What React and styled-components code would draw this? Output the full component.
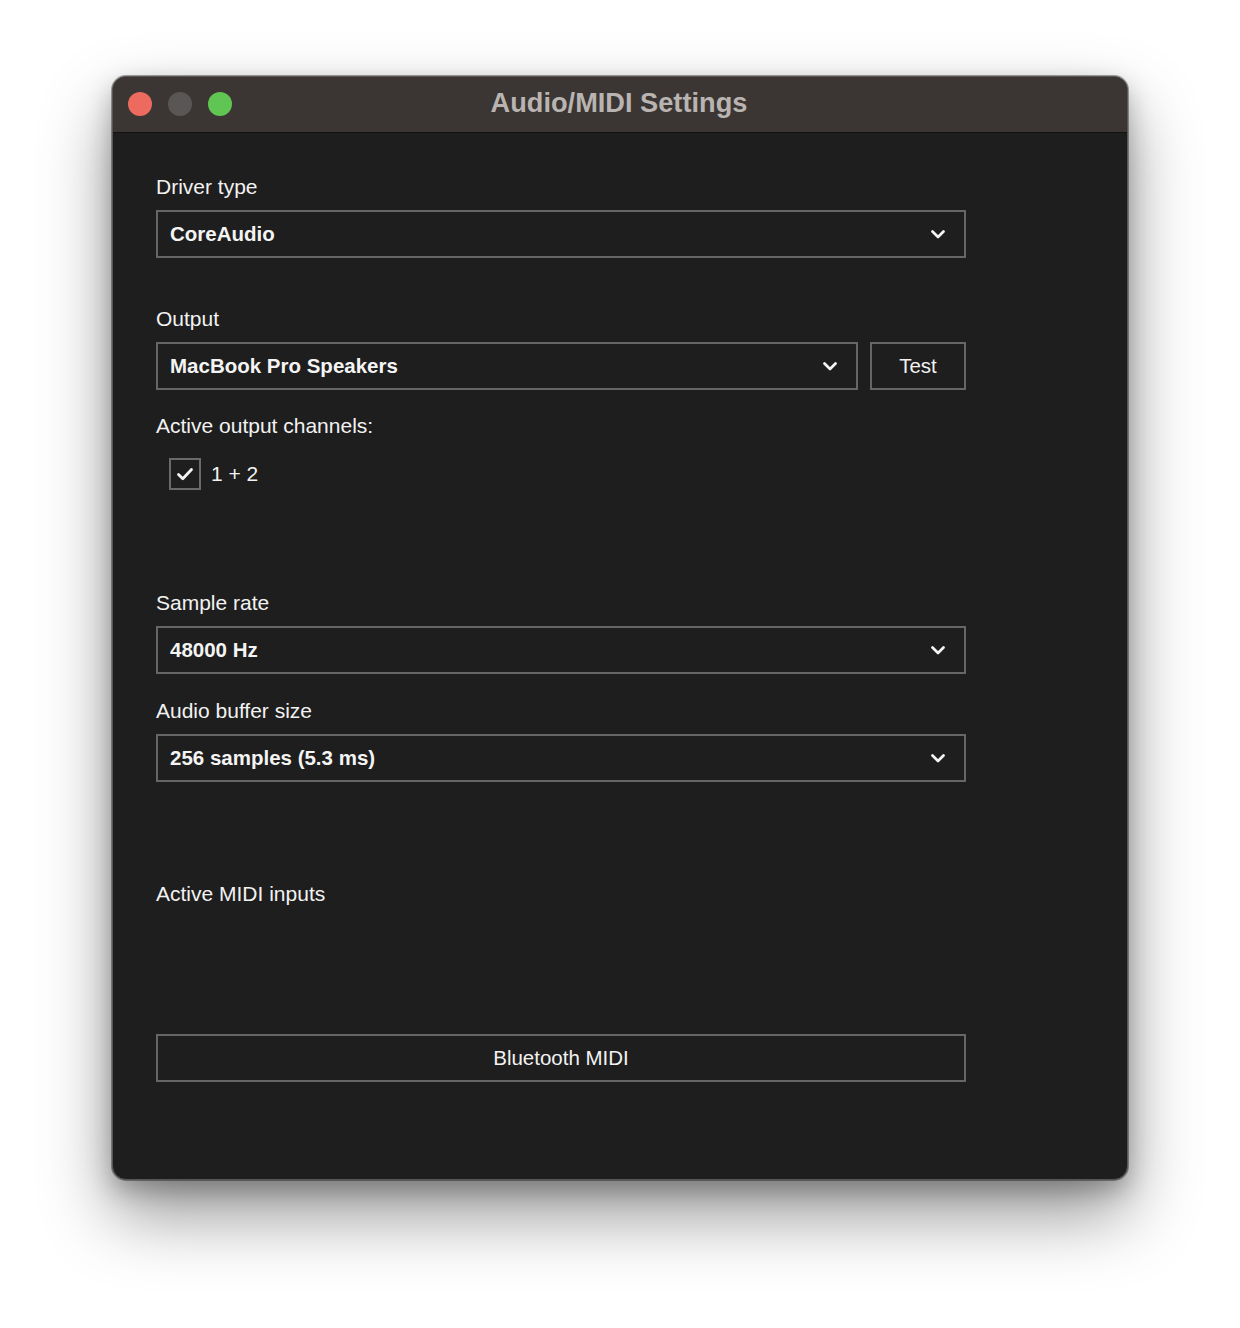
import React, { useState } from 'react'
import styled, { createGlobalStyle } from 'styled-components'

const GlobalStyle = createGlobalStyle`
  html, body {
    margin: 0;
    padding: 0;
    background: #ffffff;
    font-family: "Liberation Sans", Arial, sans-serif;
  }
`

const Page = styled.div`
  padding: 76px 112px 148px;
  background: #ffffff;
`

const Window = styled.div`
  width: 1016px;
  height: 1104px;
  box-sizing: border-box;
  border-radius: 14px;
  overflow: hidden;
  background: #1e1e1e;
  border: 1px solid #5a5656;
  box-shadow: 0 0 0 1px rgba(0, 0, 0, 0.35), 0 34px 70px rgba(0, 0, 0, 0.42), 0 10px 24px rgba(0, 0, 0, 0.25);
  display: flex;
  flex-direction: column;
`

const TitleBar = styled.div`
  height: 55px;
  flex-shrink: 0;
  background: #3b3633;
  border-bottom: 1px solid #111;
  display: flex;
  align-items: center;
  position: relative;
  padding-left: 15px;
  gap: 16px;
`

const Light = styled.span`
  width: 24px;
  height: 24px;
  border-radius: 50%;
  margin-top: -1px;
  background: ${p => p.color};
`

const Title = styled.div`
  position: absolute;
  left: 0;
  right: 0;
  top: 0;
  bottom: 0;
  display: flex;
  align-items: center;
  justify-content: center;
  padding-bottom: 3px;
  padding-right: 2px;
  font-size: 27.2px;
  font-weight: bold;
  color: #b9b4b1;
  pointer-events: none;
`

const Body = styled.div`
  padding: 42px 0 0 43px;
  width: 810px;
  display: flex;
  flex-direction: column;
`

const Label = styled.div`
  font-size: 21px;
  line-height: 24px;
  height: 24px;
  color: #f2f2f2;
  margin-top: ${p => p.$top || 0}px;
`

const Row = styled.div`
  display: flex;
  gap: 12px;
  margin-top: 11px;
`

const Select = styled.div`
  flex: 1;
  height: 48px;
  box-sizing: border-box;
  border: 2px solid #666666;
  display: flex;
  align-items: center;
  justify-content: space-between;
  padding: 0 19px 0 12px;
  font-size: 20.5px;
  font-weight: bold;
  color: #f4f4f4;
  cursor: pointer;
`

const Button = styled.button`
  width: ${p => (p.$wide ? '100%' : '96px')};
  height: 48px;
  box-sizing: border-box;
  border: 2px solid #666666;
  background: transparent;
  color: #f2f2f2;
  font-family: "Liberation Sans", Arial, sans-serif;
  font-size: 20.5px;
  padding: 0;
  cursor: pointer;
  margin-top: ${p => p.$top || 0}px;
`

const CheckRow = styled.label`
  display: flex;
  align-items: center;
  gap: 10px;
  margin-top: 20px;
  margin-left: 13px;
  font-size: 21px;
  color: #f2f2f2;
  cursor: pointer;
`

const Box = styled.span`
  width: 32px;
  height: 32px;
  box-sizing: border-box;
  border: 2px solid #6a6a6a;
  display: flex;
  align-items: center;
  justify-content: center;
`

const Chevron = () => (
  <svg width="14" height="9" viewBox="0 0 14 9" fill="none">
    <polyline points="1.5,1.5 7,7 12.5,1.5" stroke="#f4f4f4" strokeWidth="2.7" strokeLinecap="round" strokeLinejoin="round" />
  </svg>
)

const Dropdown = ({ value }) => (
  <Select>
    <span>{value}</span>
    <Chevron />
  </Select>
)

const App = () => {
  const [checked, setChecked] = useState(true)

  return (
    <Page>
      <GlobalStyle />
      <Window>
        <TitleBar>
          <Light color="#ed6a5e" />
          <Light color="#5a5655" />
          <Light color="#61c554" />
          <Title>Audio/MIDI Settings</Title>
        </TitleBar>
        <Body>
          <Label>Driver type</Label>
          <Row>
            <Dropdown value="CoreAudio" />
          </Row>

          <Label $top={49}>Output</Label>
          <Row>
            <Dropdown value="MacBook Pro Speakers" />
            <Button>Test</Button>
          </Row>

          <Label $top={24}>Active output channels:</Label>
          <CheckRow onClick={() => setChecked(!checked)}>
            <Box>
              {checked && (
                <svg width="18" height="14" viewBox="0 0 18 14" fill="none">
                  <polyline points="2.5,7.5 6.8,11.8 15.5,2.5" stroke="#f4f4f4" strokeWidth="2.8" strokeLinecap="round" strokeLinejoin="round" />
                </svg>
              )}
            </Box>
            <span>1 + 2</span>
          </CheckRow>

          <Label $top={101}>Sample rate</Label>
          <Row>
            <Dropdown value="48000 Hz" />
          </Row>

          <Label $top={25}>Audio buffer size</Label>
          <Row>
            <Dropdown value="256 samples (5.3 ms)" />
          </Row>

          <Label $top={100}>Active MIDI inputs</Label>

          <Button $wide $top={128}>Bluetooth MIDI</Button>
        </Body>
      </Window>
    </Page>
  )
}

export default App
